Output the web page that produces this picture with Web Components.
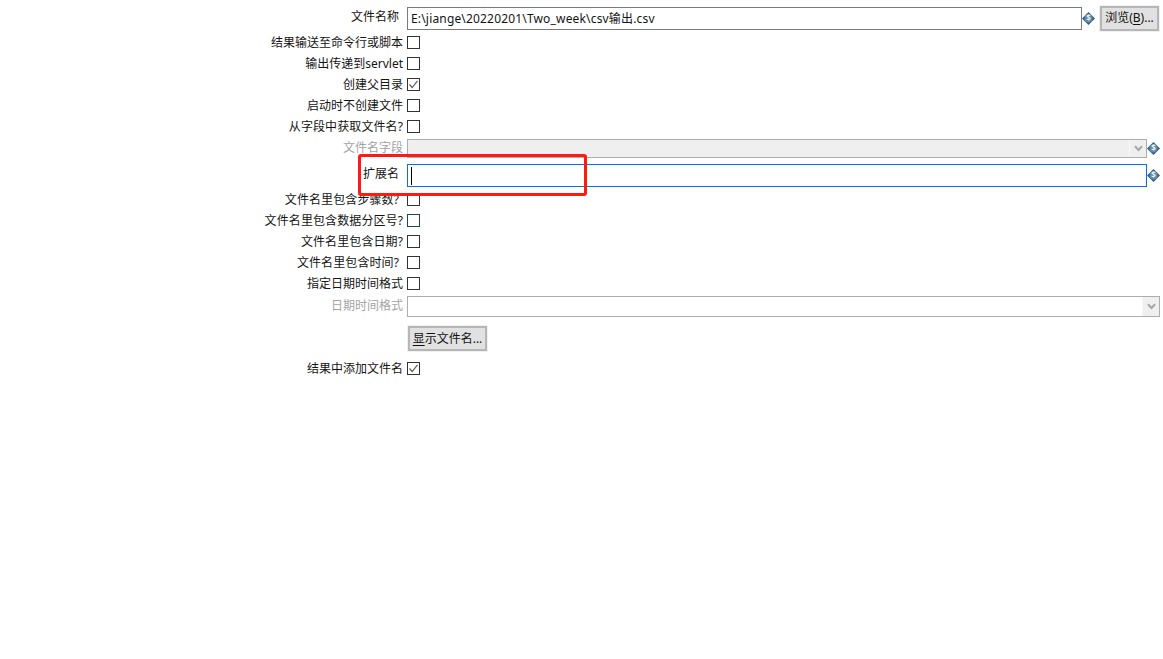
<!DOCTYPE html>
<html lang="zh"><head><meta charset="utf-8"><title>csv</title>
<style>
html,body{margin:0;padding:0;background:#fff;height:100%;overflow:hidden}
body{font:12px/16px "Noto Sans","Noto Sans CJK SC",sans-serif;color:#141414}
</style></head><body>
<spoon-form>
  <form-row h="28" top="4"  inset="4" lift="1"><span slot="label">文件名称</span><text-box value="E:\jiange\20220201\Two_week\csv输出.csv" style="width:675px;height:23px" ></text-box><var-icon></var-icon><push-button style="width:59px;height:25px;margin-left:5px;align-self:flex-start" label="浏览(B)..." u="B"></push-button></form-row>
  <form-row h="21"><span slot="label">结果输送至命令行或脚本</span><check-box></check-box></form-row>
  <form-row h="21"><span slot="label">输出传递到servlet</span><check-box></check-box></form-row>
  <form-row h="21"><span slot="label">创建父目录</span><check-box checked></check-box></form-row>
  <form-row h="21"><span slot="label">启动时不创建文件</span><check-box></check-box></form-row>
  <form-row h="21"><span slot="label" style="letter-spacing:.1px">从字段中获取文件名?</span><check-box></check-box></form-row>
  <form-row h="23" disabled lift="1"><span slot="label">文件名字段</span><combo-box filled style="width:740px;height:19px"></combo-box><var-icon></var-icon></form-row>
  <form-row h="23" top="4" inset="4" lift="2"><span slot="label">扩展名</span><text-box focused style="width:740px;height:23px"></text-box><var-icon></var-icon></form-row>
  <form-row h="21" top="2" inset="4"><span slot="label" style="letter-spacing:.1px">文件名里包含步骤数?</span><check-box></check-box></form-row>
  <form-row h="21"><span slot="label" style="letter-spacing:.1px">文件名里包含数据分区号?</span><check-box style="--cb:#1f4560"></check-box></form-row>
  <form-row h="21"><span slot="label" style="letter-spacing:.1px">文件名里包含日期?</span><check-box></check-box></form-row>
  <form-row h="21" inset="4"><span slot="label" style="letter-spacing:.1px">文件名里包含时间?</span><check-box></check-box></form-row>
  <form-row h="21"><span slot="label">指定日期时间格式</span><check-box></check-box></form-row>
  <form-row h="21" top="2" disabled lift="1"><span slot="label">日期时间格式</span><combo-box style="width:753px;height:21px"></combo-box></form-row>
  <form-row h="25" top="9"><span slot="label"></span><push-button style="width:79px;height:25px;margin-left:1px" label="显示文件名..." u="显"></push-button></form-row>
  <form-row h="21" top="7"><span slot="label">结果中添加文件名</span><check-box checked></check-box></form-row>
  <red-mark></red-mark>
</spoon-form>
<script>
function def(name, css, html, setup){
  customElements.define(name, class extends HTMLElement{
    connectedCallback(){
      if(this.shadowRoot) return;
      const r=this.attachShadow({mode:'open'});
      r.innerHTML='<style>'+css+'</style>'+(typeof html==='function'?html(this):html);
      if(setup) setup(this,r);
    }
  });
}
const esc=s=>s.replace(/&/g,'&amp;').replace(/</g,'&lt;');
def('spoon-form',':host{display:flow-root;position:relative;width:1163px;height:659px;box-sizing:border-box}','<slot></slot>');
def('form-row',
 `:host{display:flex;align-items:center;box-sizing:border-box}
  .l{width:403px;flex:none;box-sizing:border-box;text-align:right;white-space:nowrap;margin-right:4px}
  :host([disabled]) .l{color:#a3a3a3}
  .c{display:flex;align-items:center;flex:none}`,
 `<div class="l"><slot name="label"></slot></div><div class="c"><slot></slot></div>`,
 (h,r)=>{
   h.style.height=h.getAttribute('h')+'px';
   h.style.marginTop=(h.getAttribute('top')||0)+'px';
   const l=r.querySelector('.l');
   l.style.paddingRight=(h.getAttribute('inset')||0)+'px';
   if(h.getAttribute('lift')) l.style.paddingBottom=(+h.getAttribute('lift')*2)+'px';
 });
def('text-box',
 `:host{display:flex;align-items:center;box-sizing:border-box;border:1px solid #7a7a7a;background:#fff;padding:1px 0 0 3px;white-space:nowrap;color:#141414;letter-spacing:.17px}
  :host([focused]){border-color:#0078d7;padding-top:0}
  .caret{width:1px;height:18px;background:#000}`,
 h=>h.hasAttribute('focused')?'<span class="caret"></span>':'<span>'+esc(h.getAttribute('value')||'')+'</span>');
def('check-box',
 `:host{display:block;box-sizing:border-box;width:13px;height:13px;border:1px solid var(--cb,#333);background:#fff;position:relative}
  svg{position:absolute;left:0;top:0;display:block}`,
 h=>h.hasAttribute('checked')?'<svg width="11" height="11" viewBox="0 0 11 11"><path d="M1.5 5.5 4.2 8.5 9.5 1.8" fill="none" stroke="#5f5f5f" stroke-width="1.2"/></svg>':'');
def('combo-box',
 `:host{display:flex;justify-content:flex-end;box-sizing:border-box;border:1px solid #adadad;background:#fff}
  :host([filled]){background:#efefef}
  .a{width:17px;background:#efefef;border-left:1px solid #f8f8f8;display:flex;align-items:center;justify-content:center;box-sizing:border-box}
  svg{display:block}`,
 `<div class="a"><svg width="9" height="7" viewBox="0 0 9 7"><path d="M1 1.2 4.5 5 8 1.2" fill="none" stroke="#a6a6a6" stroke-width="2"/></svg></div>`);
def('var-icon',
 `:host{display:block;width:13px;height:13px;flex:none}
  svg{display:block}
  text{font:700 8px "Noto Sans",sans-serif;fill:#e8eef3}`,
 `<svg width="13" height="13" viewBox="0 0 13 13"><path d="M6.5 0 13 6.5 6.5 13 0 6.5Z" fill="#2f5f80"/><circle cx="6.5" cy="6.5" r="4" fill="#618aa6"/><text x="6.5" y="9.3" text-anchor="middle">$</text></svg>`);
def('push-button',
 `:host{display:flex;align-items:center;justify-content:center;box-sizing:border-box;border:2px solid #b6b6b6;box-shadow:0 0 0 1px #f0f0f0;background:#e1e1e1;color:#111;white-space:nowrap;flex:none}
  u{text-underline-offset:2px}`,
 h=>{const s=h.getAttribute('label'),u=h.getAttribute('u'),i=s.indexOf(u);
   return '<span>'+esc(s.slice(0,i))+'<u>'+esc(u)+'</u>'+esc(s.slice(i+u.length))+'</span>';});
def('red-mark',
 `:host{position:absolute;left:358px;top:154px;width:229px;height:42px;box-sizing:border-box;border:3px solid #ff1a0f;border-radius:3px;pointer-events:none}`,'');
</script>
</body></html>
